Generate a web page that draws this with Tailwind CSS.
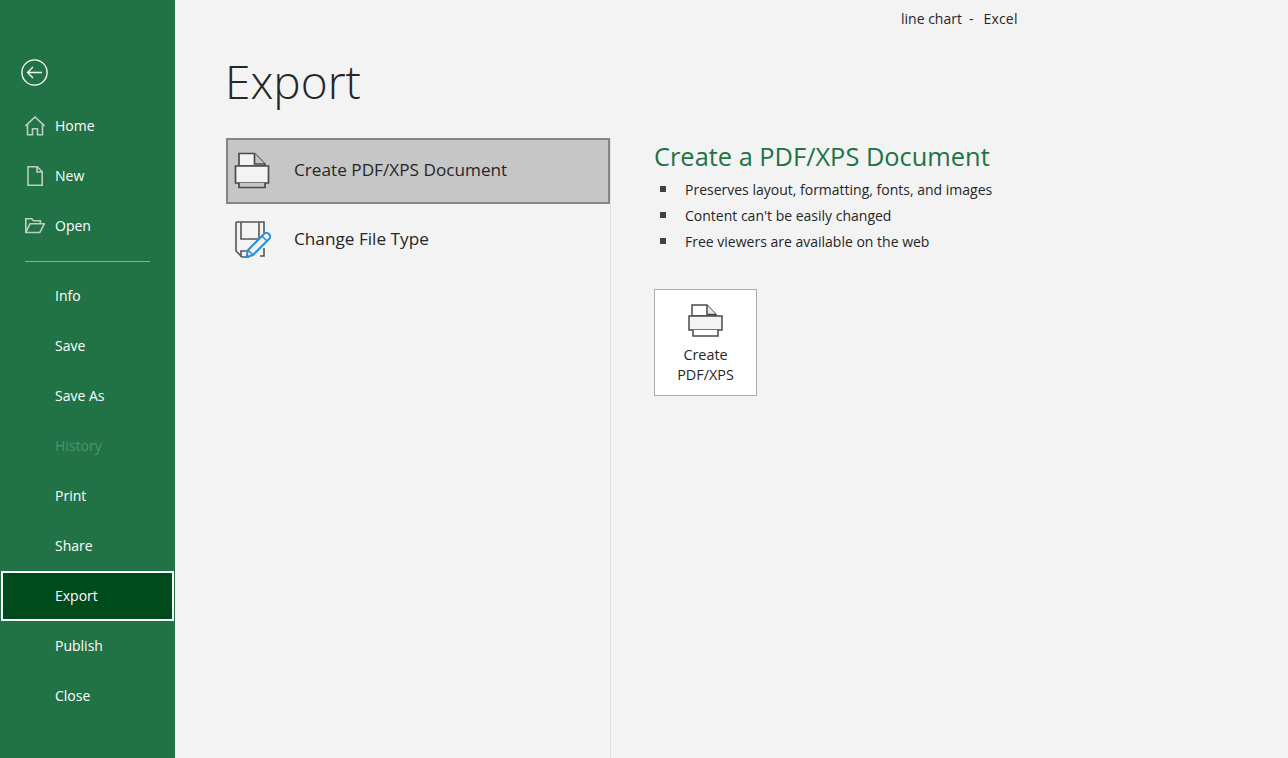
<!DOCTYPE html>
<html lang="en">
<head>
    <meta charset="UTF-8">
    <title>line chart - Excel</title>
    <script src="https://cdn.jsdelivr.net/npm/@tailwindcss/browser@4"></script>
</head>
<body class="bg-[#f3f3f3] font-['Open_Sans','Noto_Sans',sans-serif] text-[#262626] overflow-hidden">
<div class="flex w-[1288px] h-[758px]">
    <!-- Sidebar -->
    <nav class="w-[175px] shrink-0 bg-[#217346] text-white text-[14px] flex flex-col pt-[59px]">
        <div class="h-[42px] pl-[21px]">
            <svg class="w-[27px] h-[27px]" viewBox="0 0 27 27" fill="none" stroke="#fff" stroke-width="1.3"><circle cx="13.5" cy="13.5" r="12.6"/><path d="M21 13.500H6.500M12 8 6.500 13.500 12 19"/></svg>
        </div>
        <a class="h-[50px] flex items-center pl-[25px] gap-[10px]">
            <svg class="w-[20px] h-[20px]" viewBox="0 0 20 20" fill="none" stroke="#b9d0c1" stroke-width="1.6"><path d="M.5 10 10 1l9.500 9M2.500 8.500v10.300h5v-6h5v6h5V8.500"/></svg>
            <span class="mb-[1px]">Home</span>
        </a>
        <a class="h-[50px] flex items-center pl-[25px] gap-[10px]">
            <svg class="w-[20px] h-[20px]" viewBox="0 0 20 20" fill="none" stroke="#b9d0c1" stroke-width="1.6"><path d="M3 .8h9.200l5 5v13.400H3zM12 .8V6h5.200"/></svg>
            <span class="mb-[1px]">New</span>
        </a>
        <a class="h-[50px] flex items-center pl-[25px] gap-[10px]">
            <svg class="w-[20px] h-[20px]" viewBox="0 0 20 20" fill="none" stroke="#b9d0c1" stroke-width="1.6"><path d="M.8 16.500V2.800h6l1.600 2h7v3M.8 16.500h14l4.500-8.700H5L.8 16.500z"/></svg>
            <span class="mb-[1px]">Open</span>
        </a>
        <div class="mx-[25px] mt-[10px] mb-[9px] h-px bg-[#7fb596]"></div>
        <a class="h-[50px] flex items-center pl-[55px] pb-[1px]">Info</a>
        <a class="h-[50px] flex items-center pl-[55px] pb-[1px]">Save</a>
        <a class="h-[50px] flex items-center pl-[55px] pb-[1px]">Save As</a>
        <a class="h-[50px] flex items-center pl-[55px] pb-[1px] text-[#52926e]">History</a>
        <a class="h-[50px] flex items-center pl-[55px] pb-[1px]">Print</a>
        <a class="h-[50px] flex items-center pl-[55px] pb-[1px]">Share</a>
        <a class="h-[50px] flex items-center pl-[52px] pb-[1px] mx-[1px] border-2 border-white bg-[#004b1c]">Export</a>
        <a class="h-[50px] flex items-center pl-[55px] pb-[1px]">Publish</a>
        <a class="h-[50px] flex items-center pl-[55px] pb-[1px]">Close</a>
    </nav>

    <!-- Main -->
    <main class="flex-1 flex flex-col">
        <div class="h-[138px] relative">
            <div class="absolute left-[726px] top-[9px] text-[14px] leading-[20px] flex">
                <span>line chart</span><span class="ml-[7px]">-</span><span class="ml-[10px] tracking-[0.2px]">Excel</span>
            </div>
            <h1 class="pl-[50px] pt-[49px] text-[46px] leading-[64px] font-light">Export</h1>
        </div>
        <div class="flex flex-1">
            <!-- Export options -->
            <div class="w-[436px] shrink-0 pl-[51px] flex flex-col">
                <div class="w-[384px] h-[66px] bg-[#c6c6c6] border-2 border-[#858585] flex items-center pl-[6px] gap-[24px] text-[17.2px]">
                    <svg class="w-[36px] h-[38px] shrink-0" viewBox="0 0 36 38" fill="#f3f3f3" stroke="#4a4a4a" stroke-width="1.7"><path d="M5 14V1.500h15.500L31 12v2z"/><path d="M20.500 1.500V12H31" fill="#c6c6c6"/><path d="M1.500 14h33v17h-33z"/><path d="M5 31v4.500h26V31" fill="#c6c6c6"/></svg>
                    <span class="mb-[3px]">Create PDF/XPS Document</span>
                </div>
                <div class="w-[384px] h-[70px] flex items-center pl-[8px] gap-[22px] text-[17.2px]">
                    <svg class="w-[38px] h-[38px] shrink-0" viewBox="0 0 38 38" fill="none" stroke-width="1.6"><path stroke="#555" d="M7 2v17h18V2M2 2h28v11M30 28v8h-4M2 2v29l6 6h7M7 37v-6h10"/><path stroke="#2b8fd8" stroke-width="2" fill="#f3f3f3" d="M12.500 37l1.500-7L30 14c1.500-1.500 3.500-1.500 5 0s1.500 3.500 0 5L19 35z"/><path stroke="#2b8fd8" stroke-width="1.600" d="M14 30l5 5M28 16l5 5"/></svg>
                    <span>Change File Type</span>
                </div>
            </div>
            <!-- Details -->
            <div class="flex-1 border-l border-[#e1e1e1] -ml-[1px] pl-[43px]">
                <h2 class="text-[25.4px] leading-[36px] text-[#217346]">Create a PDF/XPS Document</h2>
                <ul class="text-[14px] mt-[2px]">
                    <li class="h-[26px] flex items-center pl-[6px] gap-[19px]"><span class="w-[6px] h-[6px] bg-[#404040]"></span>Preserves layout, formatting, fonts, and images</li>
                    <li class="h-[26px] flex items-center pl-[6px] gap-[19px]"><span class="w-[6px] h-[6px] bg-[#404040]"></span>Content can't be easily changed</li>
                    <li class="h-[26px] flex items-center pl-[6px] gap-[19px]"><span class="w-[6px] h-[6px] bg-[#404040]"></span>Free viewers are available on the web</li>
                </ul>
                <button class="mt-[35px] w-[103px] h-[107px] bg-white border border-[#ababab] flex flex-col items-center pt-[14px] text-[14.4px] leading-[20px]">
                    <svg class="w-[36px] h-[37px] mb-[4px]" viewBox="0 0 36 37" fill="#f3f3f3" stroke="#4a4a4a" stroke-width="1.5"><path d="M4 12V1h15l9 9.500V12z" fill="#fff"/><path d="M19 1v9.500h9" fill="#e8e8e8"/><path d="M1 12h33v14H1z"/><path d="M5 26v6h25v-6" fill="#fff"/></svg>
                    <span>Create<br>PDF/XPS</span>
                </button>
            </div>
        </div>
    </main>
</div>
</body>
</html>
